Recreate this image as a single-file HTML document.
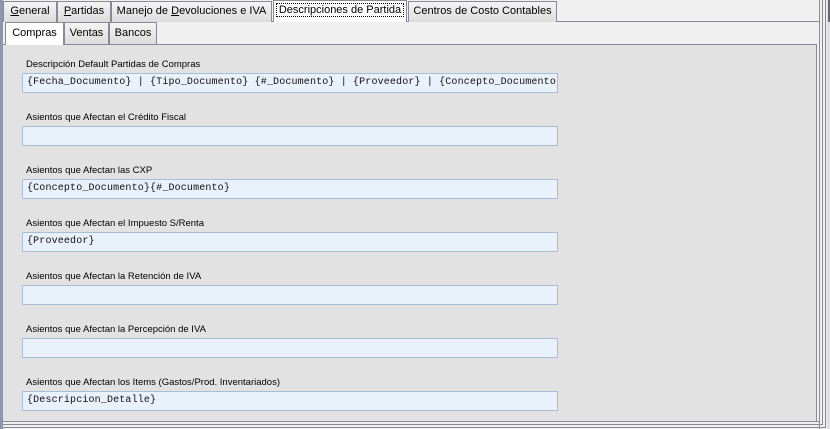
<!DOCTYPE html>
<html><head><style>
body{margin:0;width:830px;height:429px;background:#f0f0f0;position:relative;overflow:hidden;font-family:"Liberation Sans",Tahoma,sans-serif;font-size:11px;color:#000}
.a{position:absolute;box-sizing:border-box}
.tab{position:absolute;top:1px;height:21px;border:1px solid #8a8a92;border-bottom:none;background:linear-gradient(#f4f4f4,#dcdcdc);font-size:11px;line-height:19px;text-align:center;box-sizing:border-box;white-space:nowrap;overflow:hidden}
.st{position:absolute;top:22px;height:22px;border:1px solid #8a8a92;border-bottom:none;background:linear-gradient(#f4f4f4,#dcdcdc);font-size:11px;line-height:20px;text-align:center;box-sizing:border-box;white-space:nowrap}
.lbl{position:absolute;left:26px;font-size:9.5px;line-height:12px;white-space:nowrap}
.in{position:absolute;left:22px;width:536px;height:20px;background:#e9f1fb;border:1px solid #a9bdd8;box-sizing:border-box;font-family:"Liberation Mono",monospace;font-size:10px;letter-spacing:0.15px;line-height:18px;padding-left:4px;white-space:nowrap;overflow:hidden;color:#111}
</style></head><body>
<div class="a" style="left:0;top:0;width:3px;height:429px;background:#8d97a8"></div>
<div class="a" style="left:827px;top:0;width:3px;height:429px;background:#e0e0e0"></div>
<div class="a" style="left:828px;top:0;width:2px;height:22px;background:#6a6a72"></div>
<div class="a" style="left:3px;top:21px;width:817px;height:408px;border:1px solid #8a8a92;border-bottom:none;border-left:none"></div>
<div class="a" style="left:3px;top:0;width:820px;height:425px;border-right:1px solid #8a8a92;border-bottom:1px solid #8a8a92"></div>
<div class="a" style="left:3px;top:0;width:823px;height:428px;border-right:1px solid #8a8a92;border-bottom:1px solid #8a8a92"></div>
<div class="a" style="left:3px;top:0;width:817px;height:422px;border-right:1px solid #8a8a92;border-bottom:1px solid #8a8a92"></div>
<div class="tab" style="left:3px;width:54px"><u>G</u>eneral</div>
<div class="tab" style="left:57px;width:54px"><u>P</u>artidas</div>
<div class="tab" style="left:111px;width:161px">Manejo de <u>D</u>evoluciones e IVA</div>
<div class="tab" style="left:273px;top:0;width:134px;height:22px;background:#fff;z-index:2"><span style="outline:1px dotted #000;padding:0 2px">Descripciones de Partida</span></div>
<div class="tab" style="left:408px;width:149px">Centros de Costo Contables</div>
<div class="a" style="left:3px;top:44px;width:814px;height:378px;background:#e2e2e2;border:1px solid #8a8a92;border-left:none"></div>
<div class="st" style="left:5px;width:59px;background:#fff;height:23px;z-index:2">Compras</div>
<div class="st" style="left:64px;width:45px">Ventas</div>
<div class="st" style="left:109px;width:48px">Bancos</div>

<div class="lbl" style="top:59px">Descripción Default Partidas de Compras</div>
<div class="in" style="top:73px">{Fecha_Documento} | {Tipo_Documento} {#_Documento} | {Proveedor} | {Concepto_Documento}</div>
<div class="lbl" style="top:112px">Asientos que Afectan el Crédito Fiscal</div>
<div class="in" style="top:126px"></div>
<div class="lbl" style="top:165px">Asientos que Afectan las CXP</div>
<div class="in" style="top:179px">{Concepto_Documento}{#_Documento}</div>
<div class="lbl" style="top:218px">Asientos que Afectan el Impuesto S/Renta</div>
<div class="in" style="top:232px">{Proveedor}</div>
<div class="lbl" style="top:271px">Asientos que Afectan la Retención de IVA</div>
<div class="in" style="top:285px"></div>
<div class="lbl" style="top:324px">Asientos que Afectan la Percepción de IVA</div>
<div class="in" style="top:338px"></div>
<div class="lbl" style="top:377px">Asientos que Afectan los Items (Gastos/Prod. Inventariados)</div>
<div class="in" style="top:391px">{Descripcion_Detalle}</div>
</body></html>
